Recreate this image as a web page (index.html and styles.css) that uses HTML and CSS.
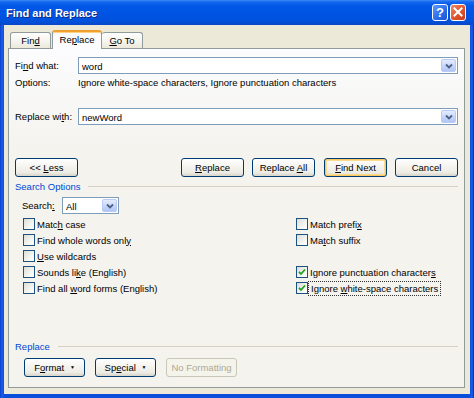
FILE: index.html
```html
<!DOCTYPE html>
<html lang="en">
<head>
    <meta charset="UTF-8">
    <title>Find and Replace</title>
    <link rel="stylesheet" href="styles.css">
</head>
<body>

    <div class="window">
        <div class="titlebar">
            <span class="title">Find and Replace</span>
            <div class="caption-btns">
                <span class="cap-btn help">?</span>
                <span class="cap-btn close">
                    <svg width="10" height="10" viewBox="0 0 10 10"><path d="M1.5 1.5 L8.5 8.5 M8.5 1.5 L1.5 8.5" stroke="#fff" stroke-width="2" stroke-linecap="square"/></svg>
                </span>
            </div>
        </div>

        <div class="client">
            <div class="tabs">
                <div class="tab tab-find">Fin<u>d</u></div>
                <div class="tab tab-replace active">Re<u>p</u>lace</div>
                <div class="tab tab-goto"><u>G</u>o To</div>
            </div>

            <div class="panel">
                <div class="field-row">
                    <span class="field-label">Fi<u>n</u>d what:</span>
                    <div class="combo">
                        <span class="combo-text">word</span>
                        <span class="drop"><svg width="8" height="6" viewBox="0 0 8 6"><path d="M1 1.5 L4 4.5 L7 1.5" fill="none" stroke="#4d6185" stroke-width="1.8"/></svg></span>
                    </div>
                </div>
                <div class="options-row">
                    <span class="field-label">Options:</span>
                    <span>Ignore white-space characters, Ignore punctuation characters</span>
                </div>
                <div class="field-row replace-row">
                    <span class="field-label">Replace wi<u>t</u>h:</span>
                    <div class="combo">
                        <span class="combo-text">newWord</span>
                        <span class="drop"><svg width="8" height="6" viewBox="0 0 8 6"><path d="M1 1.5 L4 4.5 L7 1.5" fill="none" stroke="#4d6185" stroke-width="1.8"/></svg></span>
                    </div>
                </div>

                <div class="button-row">
                    <button class="btn">&lt;&lt; <u>L</u>ess</button>
                    <button class="btn push-right"><u>R</u>eplace</button>
                    <button class="btn">Replace <u>A</u>ll</button>
                    <button class="btn default"><u>F</u>ind Next</button>
                    <button class="btn">Cancel</button>
                </div>

                <div class="group-head"><span>Search Options</span></div>

                <div class="search-row">
                    <span class="search-label">Search<u>:</u></span>
                    <div class="combo small">
                        <span class="combo-text">All</span>
                        <span class="drop"><svg width="8" height="6" viewBox="0 0 8 6"><path d="M1 1.5 L4 4.5 L7 1.5" fill="none" stroke="#4d6185" stroke-width="1.8"/></svg></span>
                    </div>
                </div>

                <div class="checks">
                    <div class="check"><span class="box"></span><span>Matc<u>h</u> case</span></div>
                    <div class="check"><span class="box"></span><span>Match prefi<u>x</u></span></div>
                    <div class="check"><span class="box"></span><span>Find whole words onl<u>y</u></span></div>
                    <div class="check"><span class="box"></span><span>Ma<u>t</u>ch suffix</span></div>
                    <div class="check"><span class="box"></span><span><u>U</u>se wildcards</span></div>
                    <div class="check empty"></div>
                    <div class="check"><span class="box"></span><span>Sounds li<u>k</u>e (English)</span></div>
                    <div class="check"><span class="box checked"><svg width="8" height="8" viewBox="0 0 8 8"><path d="M1 3.8 L3 6 L7 1.5" fill="none" stroke="#21a121" stroke-width="1.8"/></svg></span><span>Ignore punctuation character<u>s</u></span></div>
                    <div class="check"><span class="box"></span><span>Find all <u>w</u>ord forms (English)</span></div>
                    <div class="check"><span class="box checked"><svg width="8" height="8" viewBox="0 0 8 8"><path d="M1 3.8 L3 6 L7 1.5" fill="none" stroke="#21a121" stroke-width="1.8"/></svg></span><span class="focused">Ignore <u>w</u>hite-space characters</span></div>
                </div>

                <div class="group-head replace-head"><span>Replace</span></div>

                <div class="button-row bottom-row">
                    <button class="btn menu">F<u>o</u>rmat <span class="caret">▼</span></button>
                    <button class="btn menu">Sp<u>e</u>cial <span class="caret">▼</span></button>
                    <button class="btn wide" disabled>No Formatting</button>
                </div>
            </div>
        </div>
    </div>

</body>
</html>
```

FILE: styles.css
```css
* {
    margin: 0;
    padding: 0;
    box-sizing: border-box;
}

body {
    font-family: 'Liberation Sans', Arial, sans-serif;
    font-size: 9.5px;
    color: #000;
    background: #fff;
}

u {
    text-decoration-thickness: 1px;
    text-underline-offset: 1px;
}

.window {
    width: 474px;
    height: 398px;
    display: flex;
    flex-direction: column;
    background: linear-gradient(90deg, #0a3fd0 0, #1a5ee8 2px, #0a4fdc 4px, #0a4fdc 470px, #1a5ee8 472px, #0030b8 474px);
}

/* Title bar */
.titlebar {
    height: 25px;
    flex: none;
    display: flex;
    align-items: center;
    justify-content: space-between;
    padding: 0 8px 0 6px;
    background: linear-gradient(#3d8cf7 0, #1466ee 2px, #0058e6 6px, #0054e3 14px, #0051dc 21px, #0a46c8 25px);
    color: #fff;
}

.title {
    font-weight: bold;
    font-size: 11px;
    text-shadow: 1px 1px 0 #0a2a8a;
    padding-top: 1px;
}

.caption-btns {
    display: flex;
    gap: 2px;
    padding-bottom: 1px;
}

.cap-btn {
    width: 16px;
    height: 17px;
    border: 1px solid #fff;
    border-radius: 3px;
    display: flex;
    align-items: center;
    justify-content: center;
}

.help {
    background: linear-gradient(135deg, #5d9bfb, #2a6ae6 60%, #1c55d6);
    font-weight: bold;
    font-size: 13px;
    color: #fff;
}

.close {
    background: linear-gradient(135deg, #f08a68, #e0552d 55%, #c83d1a);
}

/* Client area */
.client {
    flex: 1;
    margin: 0 4px 4px 4px;
    background: #ece9d8;
    padding: 5px 5px 6px 4px;
    display: flex;
    flex-direction: column;
}

.tabs {
    height: 19px;
    display: flex;
    align-items: flex-end;
    margin: 0 0 -1px 2px;
    position: relative;
    z-index: 1;
}

.tab {
    height: 16px;
    margin-bottom: 1px;
    border: 1px solid #919b9c;
    border-bottom: none;
    border-radius: 3px 3px 0 0;
    background: linear-gradient(#fefefe, #f4f3ee 60%, #ece9d8);
    text-align: center;
    line-height: 15px;
}

.tab-find {
    width: 41px;
    margin-right: 1px;
}

.tab-replace {
    width: 50px;
}

.tab-goto {
    width: 41px;
    border-left: none;
}

.tab.active {
    height: 19px;
    margin-bottom: 0;
    border-top: 2px solid #f0a030;
    box-shadow: inset 0 1px 0 #ffd080;
    background: #fcfcfe;
    line-height: 15px;
}

.panel {
    flex: 1;
    border: 1px solid #919b9c;
    background: linear-gradient(#fcfcfe, #f4f3ee 30%);
    padding: 8px 6px 0 6px;
    display: flex;
    flex-direction: column;
}

/* Text fields */
.field-row {
    height: 17px;
    display: flex;
    align-items: center;
}

.field-label {
    width: 63px;
    flex: none;
}

.combo {
    flex: 1;
    height: 17px;
    border: 1px solid #7f9db9;
    background: #fff;
    display: flex;
    align-items: center;
    justify-content: space-between;
    padding: 1px 1px 1px 3px;
}

.combo-text {
    padding-top: 1px;
}

.drop {
    width: 15px;
    height: 13px;
    border: 1px solid #b9cbf3;
    border-radius: 2px;
    background: linear-gradient(#e4ecfe, #c4d4fa 60%, #b1c6f4);
    display: flex;
    align-items: center;
    justify-content: center;
}

.options-row {
    height: 14px;
    margin-top: 1px;
    display: flex;
    align-items: center;
}

.replace-row {
    margin-top: 19px;
}

/* Buttons */
.button-row {
    display: flex;
    gap: 8px;
    margin-top: 33px;
}

.btn {
    width: 63px;
    height: 19px;
    border: 1px solid #003c74;
    border-radius: 3px;
    background: linear-gradient(#ffffff, #f6f5f0 40%, #ecebe4 80%, #d8d4c8);
    font-family: inherit;
    font-size: 9.5px;
    color: #000;
    text-align: center;
    line-height: 17px;
    white-space: nowrap;
}

.push-right {
    margin-left: auto;
}

.btn.default {
    box-shadow: inset 0 0 0 1px #f9c866, inset 0 0 0 2px #fbdc8c;
    margin-left: 1px;
}

.btn:disabled {
    border-color: #c9c7ba;
    color: #aca899;
    background: #f5f4ea;
}

.btn.wide {
    width: 71px;
}

.btn.menu {
    width: 61px;
}

.caret {
    font-size: 5px;
    margin-left: 3px;
    vertical-align: 2px;
}

/* Group headings */
.group-head {
    height: 12px;
    margin-top: 3px;
    display: flex;
    align-items: center;
    color: #0046d5;
}

.group-head::after {
    content: '';
    flex: 1;
    border-top: 1px solid #d5d2c4;
    margin-left: 8px;
}

.replace-head {
    margin-top: 44px;
}

.search-row {
    height: 17px;
    margin-top: 5px;
    padding-left: 7px;
    display: flex;
    align-items: center;
}

.search-label {
    width: 40px;
}

.combo.small {
    flex: none;
    width: 57px;
}

/* Checkboxes */
.checks {
    margin-top: 2px;
    padding-left: 8px;
    display: grid;
    grid-template-columns: 273px 1fr;
    grid-auto-rows: 16px;
}

.check {
    display: flex;
    align-items: center;
}

.box {
    width: 12px;
    height: 12px;
    border: 1px solid #1c5180;
    background: linear-gradient(135deg, #dcdcd7, #f8f8f6 70%, #fff);
    margin-right: 2px;
    display: flex;
    align-items: center;
    justify-content: center;
}

.focused {
    outline: 1px dotted #333;
    outline-offset: 1px;
    padding: 0 1px;
}

.bottom-row {
    margin-top: 6px;
    padding-left: 9px;
    gap: 10px;
}
```
